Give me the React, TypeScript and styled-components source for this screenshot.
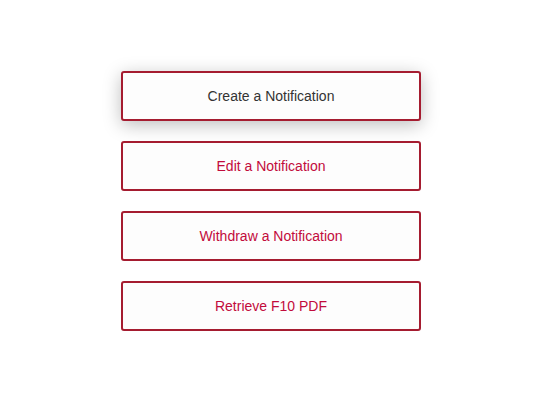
import styled, { createGlobalStyle } from "styled-components";

const GlobalStyle = createGlobalStyle`
  body {
    margin: 0;
    background-color: #fff;
    font-family: "Liberation Sans", Arial, sans-serif;
  }
`;

const actions = [
  { label: "Create a Notification", active: true },
  { label: "Edit a Notification", active: false },
  { label: "Withdraw a Notification", active: false },
  { label: "Retrieve F10 PDF", active: false },
];

const App = () => {
  return (
    <>
      <GlobalStyle />
      <ActionList>
        {actions.map((item) => (
          <ActionButton key={item.label} $active={item.active}>
            {item.label}
          </ActionButton>
        ))}
      </ActionList>
    </>
  );
};

const ActionList = styled.div`
  display: flex;
  flex-direction: column;
  align-items: center;
  gap: 20px;
  padding: 71px 0 0 5px;
`;

const ActionButton = styled.button<{ $active: boolean }>`
  width: 300px;
  height: 50px;
  box-sizing: border-box;
  border: 2px solid #a51c30;
  border-radius: 3px;
  background-color: #fdfdfd;
  font-family: "Liberation Sans", Arial, sans-serif;
  font-size: 14px;
  color: ${(p) => (p.$active ? "#333333" : "#c20b3c")};
  box-shadow: ${(p) =>
    p.$active ? "0 4px 18px rgba(0, 0, 0, 0.26)" : "none"};
  cursor: pointer;
`;

export default App;
